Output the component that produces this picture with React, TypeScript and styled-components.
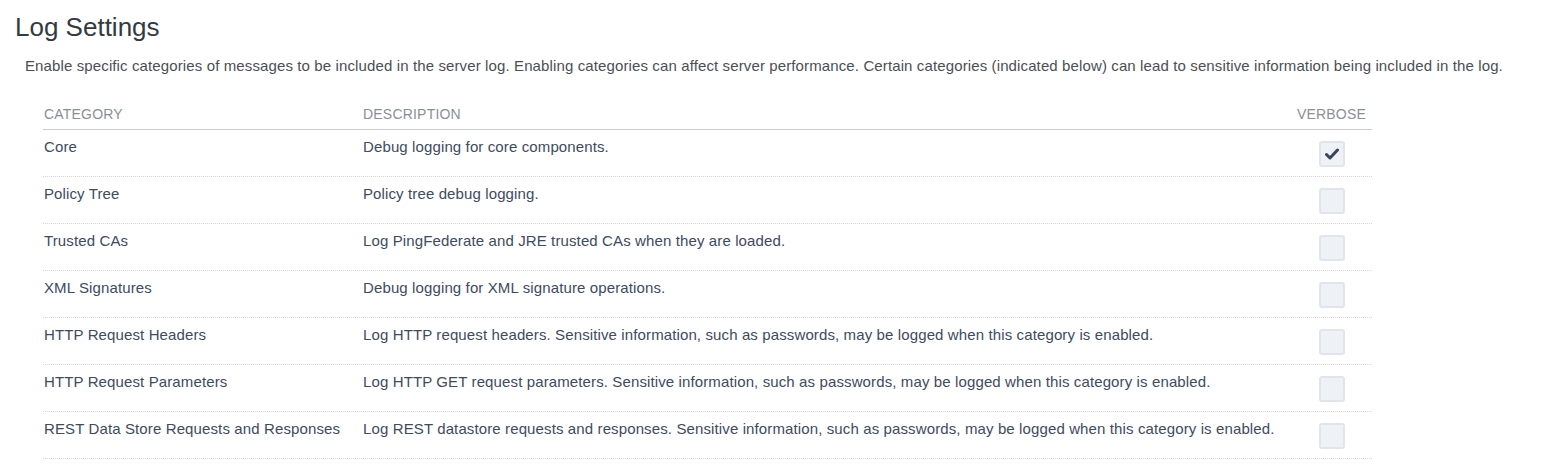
import styled, { createGlobalStyle } from "styled-components"

interface Category {
    name: string
    description: string
    verbose: boolean
}

const categories: Category[] = [
    { name: "Core", description: "Debug logging for core components.", verbose: true },
    { name: "Policy Tree", description: "Policy tree debug logging.", verbose: false },
    { name: "Trusted CAs", description: "Log PingFederate and JRE trusted CAs when they are loaded.", verbose: false },
    { name: "XML Signatures", description: "Debug logging for XML signature operations.", verbose: false },
    { name: "HTTP Request Headers", description: "Log HTTP request headers. Sensitive information, such as passwords, may be logged when this category is enabled.", verbose: false },
    { name: "HTTP Request Parameters", description: "Log HTTP GET request parameters. Sensitive information, such as passwords, may be logged when this category is enabled.", verbose: false },
    { name: "REST Data Store Requests and Responses", description: "Log REST datastore requests and responses. Sensitive information, such as passwords, may be logged when this category is enabled.", verbose: false },
]

const GlobalStyle = createGlobalStyle`
    body {
        margin: 0;
        background: #fff;
        font-family: "Liberation Sans", Arial, sans-serif;
    }
`

const Page = styled.div`
    padding: 12px 0 0 15px;
`

const Title = styled.h1`
    margin: 0;
    font-size: 26px;
    font-weight: 400;
    line-height: 30px;
    color: #333a40;
`

const Intro = styled.p`
    margin: 15px 0 0 10px;
    font-size: 15px;
    letter-spacing: 0.12px;
    line-height: 18px;
    color: #4a4f55;
    white-space: nowrap;
`

const Table = styled.div`
    margin: 31px 0 0 28px;
    width: 1329px;
`

const HeaderRow = styled.div`
    display: grid;
    grid-template-columns: 319px minmax(0, 1fr) 120px;
    border-bottom: 1px solid #c9cdd2;
    padding-bottom: 7px;
    font-size: 14px;
    letter-spacing: 0.2px;
    line-height: 16px;
    color: #8a8f96;
    text-transform: uppercase;
`

const HeadCell = styled.div<{ $right?: boolean }>`
    padding-left: ${p => (p.$right ? "0" : "1px")};
    padding-right: ${p => (p.$right ? "6px" : "0")};
    text-align: ${p => (p.$right ? "right" : "left")};
`

const Row = styled.div`
    box-sizing: border-box;
    display: grid;
    grid-template-columns: 319px minmax(0, 1fr) 120px;
    height: 47px;
    border-bottom: 1px dotted #d4d7db;
    font-size: 15px;
    letter-spacing: 0.12px;
    color: #3d4b5f;
`

const Cell = styled.div`
    padding: 7px 0 0 1px;
    line-height: 20px;
    white-space: nowrap;
`

const CheckCell = styled.div`
    display: flex;
    justify-content: flex-end;
    padding: 11px 27px 0 0;
`

const Box = styled.div`
    box-sizing: border-box;
    width: 26px;
    height: 26px;
    border: 2px solid #e1e5e9;
    border-radius: 3px;
    background: #eef2f6;
    display: flex;
    align-items: center;
    justify-content: center;
`

function Check() {
    return (
        <svg width="14" height="12" viewBox="0 0 14 12">
            <path d="M1.5 6.5 L5 10 L12.5 2" fill="none" stroke="#36445e" strokeWidth="3" strokeLinecap="round" strokeLinejoin="round" />
        </svg>
    )
}

export default function App() {
    return (
        <Page>
            <GlobalStyle />
            <Title>Log Settings</Title>
            <Intro>
                Enable specific categories of messages to be included in the server log. Enabling categories can affect server performance. Certain categories (indicated below) can lead to sensitive information being included in the log.
            </Intro>
            <Table>
                <HeaderRow>
                    <HeadCell>Category</HeadCell>
                    <HeadCell>Description</HeadCell>
                    <HeadCell $right>Verbose</HeadCell>
                </HeaderRow>
                {categories.map(c => (
                    <Row key={c.name}>
                        <Cell>{c.name}</Cell>
                        <Cell>{c.description}</Cell>
                        <CheckCell>
                            <Box>{c.verbose && <Check />}</Box>
                        </CheckCell>
                    </Row>
                ))}
            </Table>
        </Page>
    )
}
